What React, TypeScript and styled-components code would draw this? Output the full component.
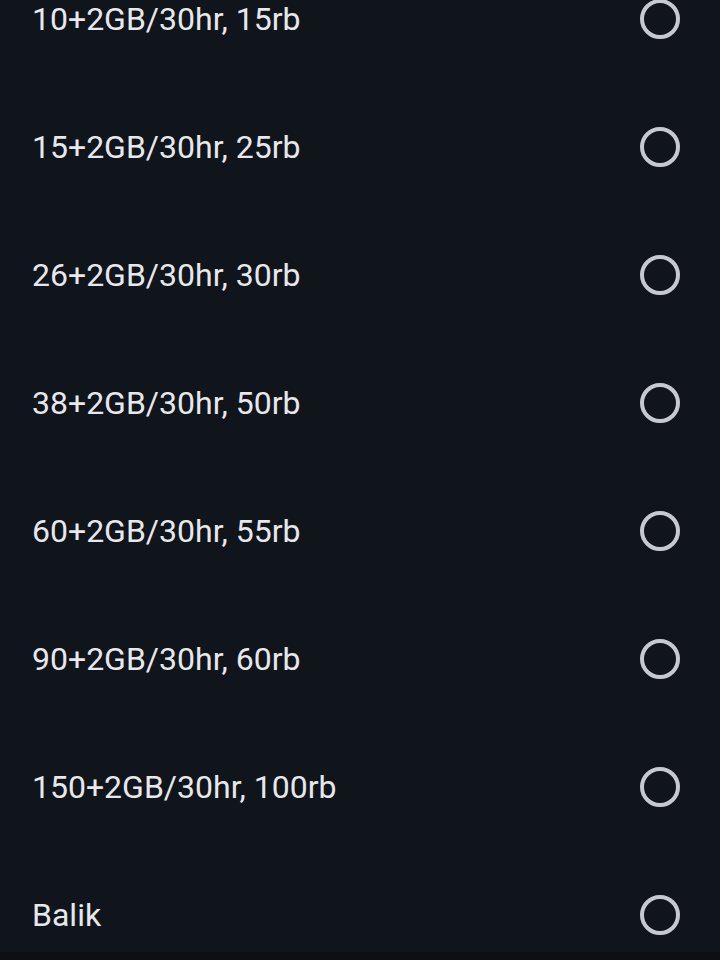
import React from "react";
import styled, { createGlobalStyle } from "styled-components";

const Global = createGlobalStyle`
  html, body { margin: 0; padding: 0; background: #10141b; }
  body { font-family: Roboto, "Noto Sans", sans-serif; }
`;

const Screen = styled.div`
  width: 720px;
  height: 960px;
  overflow: hidden;
  background: #10141b;
  display: flex;
  flex-direction: column;
`;

const Viewport = styled.div`
  flex: 1;
  overflow: hidden;
`;

const List = styled.div`
  display: flex;
  flex-direction: column;
  margin-top: -45px;
`;

const Row = styled.label`
  height: 128px;
  display: flex;
  align-items: center;
  justify-content: space-between;
  padding: 0 40px 0 32px;
`;

const Label = styled.span`
  color: #e6e8eb;
  font-size: 32px;
  line-height: 1;
`;

const Radio = styled.span`
  width: 40px;
  height: 40px;
  box-sizing: border-box;
  border-radius: 50%;
  border: 4px solid #c6c9cd;
`;

const BottomBar = styled.div`
  height: 8px;
  background: #0c0f14;
`;

const options = [
  "10+2GB/30hr, 15rb",
  "15+2GB/30hr, 25rb",
  "26+2GB/30hr, 30rb",
  "38+2GB/30hr, 50rb",
  "60+2GB/30hr, 55rb",
  "90+2GB/30hr, 60rb",
  "150+2GB/30hr, 100rb",
  "Balik",
];

export default function App() {
  return (
    <>
      <Global />
      <Screen>
        <Viewport>
          <List>
            {options.map((o) => (
              <Row key={o}>
                <Label>{o}</Label>
                <Radio />
              </Row>
            ))}
          </List>
        </Viewport>
        <BottomBar />
      </Screen>
    </>
  );
}
